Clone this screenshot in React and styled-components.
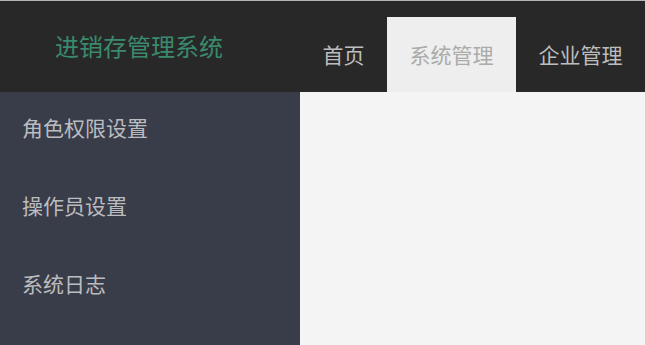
import { createGlobalStyle } from 'styled-components';
import styled from 'styled-components';

const GlobalStyle = createGlobalStyle`
  html, body, #root {
    margin: 0;
    padding: 0;
    height: 100%;
  }
  body {
    font-family: "Noto Sans CJK SC", "Noto Sans", sans-serif;
    background: #f4f4f4;
  }
`;

const Layout = styled.div`
  display: flex;
  flex-direction: column;
  height: 100%;
  border-top: 1px solid #b4b4b4;
  box-sizing: border-box;
`;

const Header = styled.header`
  display: flex;
  height: 91px;
  background: #282828;
  flex-shrink: 0;
`;

const Logo = styled.div`
  width: 300px;
  padding-left: 55px;
  box-sizing: border-box;
  line-height: 90px;
  font-size: 24px;
  color: #3a8a6d;
  white-space: nowrap;
`;

const Nav = styled.ul`
  display: flex;
  align-items: flex-end;
  margin: 0;
  padding: 0;
  list-style: none;
`;

const NavItem = styled.li`
  height: 75px;
  line-height: 75px;
  padding: 0 22.5px;
  font-size: 21px;
  white-space: nowrap;
  cursor: pointer;
  color: ${(props) => (props.active ? '#ababab' : '#bdbdbd')};
  background: ${(props) => (props.active ? '#eeeeee' : 'transparent')};
`;

const Body = styled.div`
  display: flex;
  flex: 1;
`;

const Side = styled.aside`
  width: 300px;
  background: #393d49;
  flex-shrink: 0;
`;

const SideItem = styled.div`
  height: 78px;
  line-height: 71px;
  padding: 0 0 7px 22px;
  box-sizing: border-box;
  font-size: 21px;
  color: #bbbcbf;
  cursor: pointer;
`;

const Content = styled.main`
  flex: 1;
  background: #f4f4f4;
`;

const tabs = ['首页', '系统管理', '企业管理'];
const menu = ['角色权限设置', '操作员设置', '系统日志'];

function App() {
  return (
    <>
      <GlobalStyle />
      <Layout>
        <Header>
          <Logo>进销存管理系统</Logo>
          <Nav>
            {tabs.map((t) => (
              <NavItem key={t} active={t === '系统管理'}>
                {t}
              </NavItem>
            ))}
          </Nav>
        </Header>
        <Body>
          <Side>
            {menu.map((m) => (
              <SideItem key={m}>{m}</SideItem>
            ))}
          </Side>
          <Content />
        </Body>
      </Layout>
    </>
  );
}

export default App;
